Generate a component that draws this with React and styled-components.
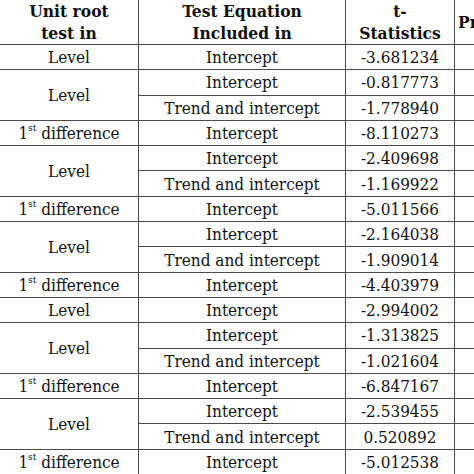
import styled, { createGlobalStyle } from 'styled-components';

const GlobalStyle = createGlobalStyle`
  html, body {
    margin: 0;
    padding: 0;
    background: #fff;
  }
`;

const groups = [
  { rows: [{ eq: 'Intercept', t: '-3.681234' }], test: 'Level' },
  { rows: [{ eq: 'Intercept', t: '-0.817773' }, { eq: 'Trend and intercept', t: '-1.778940' }], test: 'Level' },
  { rows: [{ eq: 'Intercept', t: '-8.110273' }], test: 'first' },
  { rows: [{ eq: 'Intercept', t: '-2.409698' }, { eq: 'Trend and intercept', t: '-1.169922' }], test: 'Level' },
  { rows: [{ eq: 'Intercept', t: '-5.011566' }], test: 'first' },
  { rows: [{ eq: 'Intercept', t: '-2.164038' }, { eq: 'Trend and intercept', t: '-1.909014' }], test: 'Level' },
  { rows: [{ eq: 'Intercept', t: '-4.403979' }], test: 'first' },
  { rows: [{ eq: 'Intercept', t: '-2.994002' }], test: 'Level' },
  { rows: [{ eq: 'Intercept', t: '-1.313825' }, { eq: 'Trend and intercept', t: '-1.021604' }], test: 'Level' },
  { rows: [{ eq: 'Intercept', t: '-6.847167' }], test: 'first' },
  { rows: [{ eq: 'Intercept', t: '-2.539455' }, { eq: 'Trend and intercept', t: '0.520892' }], test: 'Level' },
  { rows: [{ eq: 'Intercept', t: '-5.012538' }], test: 'first' },
];

function TestLabel({ kind }) {
  if (kind === 'first') {
    return (
      <>
        1<Sup>st</Sup> difference
      </>
    );
  }
  return kind;
}

function App() {
  return (
    <>
      <GlobalStyle />
      <Frame>
        <Table>
          <colgroup>
            <col style={{ width: 139 }} />
            <col style={{ width: 207 }} />
            <col style={{ width: 109 }} />
            <col style={{ width: 110 }} />
          </colgroup>
          <thead>
            <tr>
              <Head>Unit root<br />test in</Head>
              <Head>Test Equation<br />Included in</Head>
              <Head>t-<br />Statistics</Head>
              <Head $left>Prob.</Head>
            </tr>
          </thead>
          <tbody>
            {groups.map((g, gi) =>
              g.rows.map((r, ri) => (
                <tr key={gi + '-' + ri}>
                  {ri === 0 && (
                    <Cell rowSpan={g.rows.length}>
                      <TestLabel kind={g.test} />
                    </Cell>
                  )}
                  <Cell>{r.eq}</Cell>
                  <Cell>{r.t}</Cell>
                  <Cell />
                </tr>
              ))
            )}
          </tbody>
        </Table>
      </Frame>
    </>
  );
}

const Frame = styled.div`
  width: 474px;
  height: 474px;
  overflow: hidden;
  background: #fff;
`;

const Table = styled.table`
  border-collapse: collapse;
  table-layout: fixed;
  width: 565px;
  margin-left: -1px;
  margin-top: -1px;
  font-family: 'DejaVu Serif', 'Liberation Serif', serif;
  font-stretch: condensed;
  color: #111;
`;

const Head = styled.th`
  height: 44px;
  padding: 0 2px;
  border: 1px solid #4a4a4a;
  font-size: 17.3px;
  line-height: 22px;
  font-weight: bold;
  text-align: ${(p) => (p.$left ? 'left' : 'center')};
  vertical-align: middle;
  padding-left: ${(p) => (p.$left ? '3px' : '2px')};
`;

const Cell = styled.td`
  height: 24.3px;
  padding: 0 2px;
  border: 1px solid #4a4a4a;
  font-size: 17px;
  line-height: 20px;
  text-align: center;
  vertical-align: middle;
  white-space: nowrap;
`;

const Sup = styled.sup`
  font-size: 10px;
  line-height: 0;
  position: relative;
  top: -1px;
`;

export default App;
